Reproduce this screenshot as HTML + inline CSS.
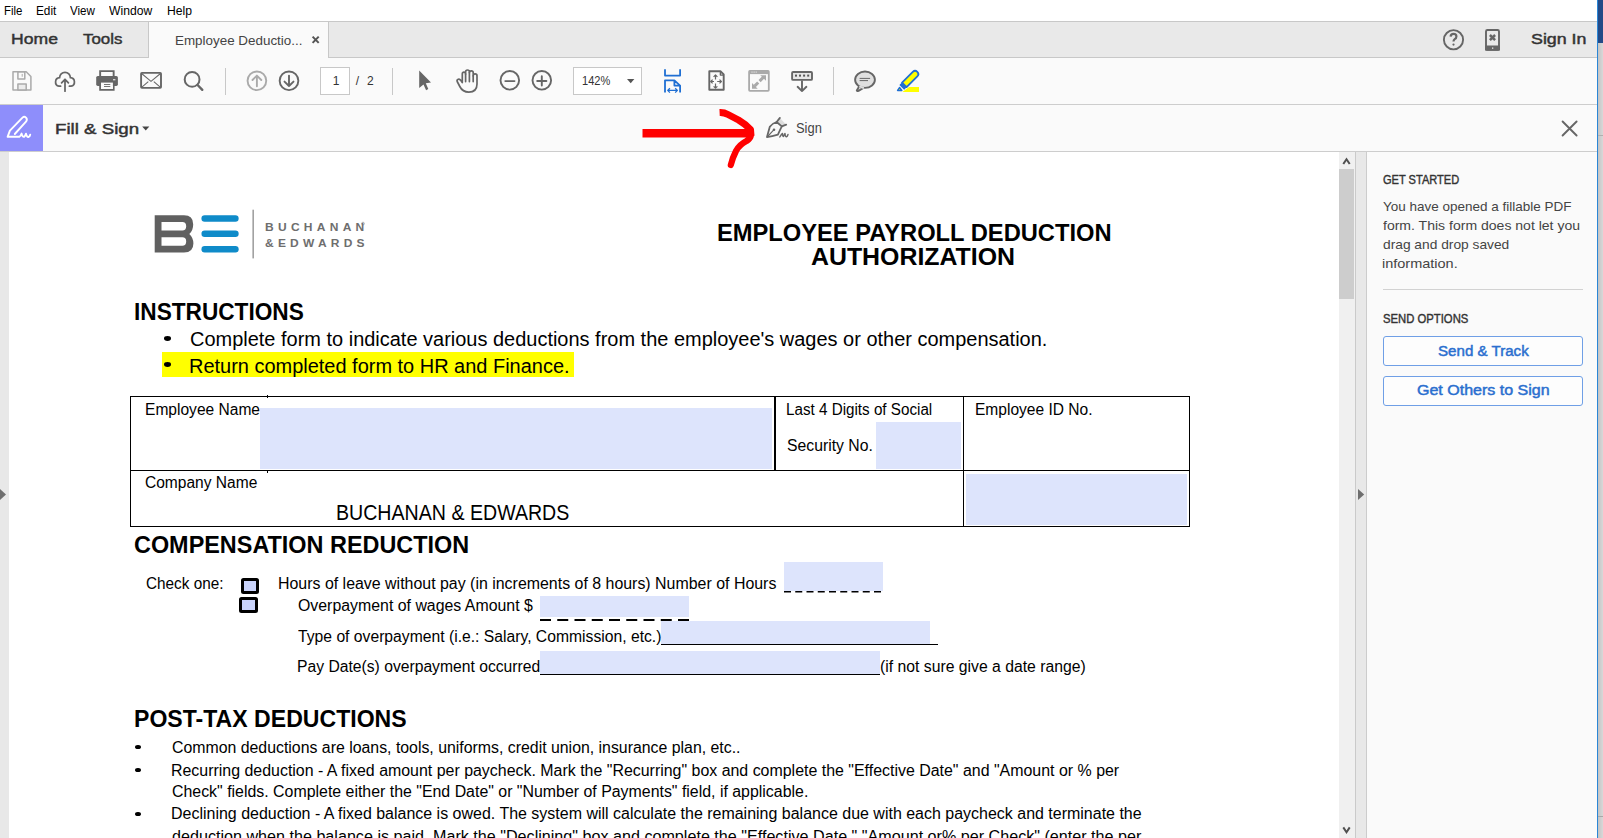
<!DOCTYPE html>
<html><head><meta charset="utf-8">
<style>
*{margin:0;padding:0;box-sizing:border-box}
html,body{width:1603px;height:838px;overflow:hidden;background:#fff;font-family:"Liberation Sans",sans-serif}
.a{position:absolute}
.t{position:absolute;white-space:nowrap;line-height:1;transform-origin:0 0}
svg{position:absolute;overflow:visible}
</style></head><body>
<!-- menu bar -->
<div class="a" style="left:0;top:21px;width:1597px;height:1px;background:#c8c8c8"></div>
<!-- tab bar -->
<div class="a" style="left:0;top:22px;width:1597px;height:35px;background:#e9e9e9"></div>
<div class="a" style="left:0;top:57px;width:1597px;height:1px;background:#c8c8c8"></div>
<div class="a" style="left:148px;top:21px;width:181px;height:37px;background:#fafafa;border:1px solid #c8c8c8;border-bottom:none"></div>
<!-- toolbar -->
<div class="a" style="left:0;top:58px;width:1597px;height:46px;background:#fafafa"></div>
<div class="a" style="left:0;top:104px;width:1597px;height:1px;background:#cdcdcd"></div>
<!-- fill sign bar -->
<div class="a" style="left:0;top:105px;width:1597px;height:46px;background:#fafafa"></div>
<div class="a" style="left:0;top:151px;width:1597px;height:1px;background:#cdcdcd"></div>
<div class="a" style="left:0;top:105px;width:43px;height:46px;background:#8e8efb"></div>
<!-- doc area -->
<div class="a" style="left:0;top:152px;width:9px;height:686px;background:#e8e8e8"></div>
<div class="a" style="left:1339px;top:152px;width:16px;height:686px;background:#f0f0f0"></div>
<div class="a" style="left:1339px;top:169px;width:15px;height:130px;background:#cdcdcd"></div>
<div class="a" style="left:1355px;top:152px;width:1px;height:686px;background:#cacaca"></div>
<div class="a" style="left:1356px;top:152px;width:10px;height:686px;background:#e8e8e8"></div>
<div class="a" style="left:1366px;top:152px;width:1px;height:686px;background:#cccccc"></div>
<div class="a" style="left:1367px;top:152px;width:230px;height:686px;background:#fafafa"></div>
<!-- window border right -->
<div class="a" style="left:1597px;top:0;width:1px;height:838px;background:#2a86d6"></div>
<div class="a" style="left:1598px;top:0;width:5px;height:43px;background:#234a87"></div>
<div class="a" style="left:1598px;top:43px;width:5px;height:795px;background:linear-gradient(90deg,#c4c4c4,#d8d8d8)"></div>
<div class="a" style="left:1598px;top:135px;width:5px;height:1px;background:#b0b0b0"></div>
<div class="a" style="left:1598px;top:816px;width:5px;height:1px;background:#a8a8a8"></div>


<!-- panel extras -->
<div class="a" style="left:1383px;top:289px;width:200px;height:1px;background:#d2d2d2"></div>
<div class="a" style="left:1383px;top:336px;width:200px;height:30px;border:1px solid #6f9fe6;border-radius:3px;background:#fdfdfd"></div>
<div class="a" style="left:1383px;top:376px;width:200px;height:30px;border:1px solid #6f9fe6;border-radius:3px;background:#fdfdfd"></div>
<svg class="a" style="left:0;top:0" width="1603" height="838">
  <path d="M1343.3 164 L1346.5 159.2 L1349.7 164" fill="none" stroke="#505050" stroke-width="2"/>
  <path d="M1343.3 827.4 L1346.5 832.2 L1349.7 827.4" fill="none" stroke="#505050" stroke-width="2"/>
  <path d="M1358 489 L1364.2 494.5 L1358 500 Z" fill="#6e6e6e"/>
  <path d="M0 489 L6 494.5 L0 500 Z" fill="#6e6e6e"/>
</svg>
<!-- ===== document graphics ===== -->
<svg class="a" style="left:0;top:0" width="400" height="300" viewBox="0 0 400 300">
  <path fill="#606060" fill-rule="evenodd" d="M154.7 215.2 H184 Q193.2 215.2 193.2 224.2 Q193.2 230.5 189.3 233.9 Q193.4 237.5 193.4 243.6 Q193.4 252.6 184 252.6 H154.7 Z M161.5 222 H182.3 Q186.2 222 186.2 226.25 Q186.2 230.5 182.3 230.5 H161.5 Z M161.5 237.3 H182.3 Q186.2 237.3 186.2 241.5 Q186.2 245.7 182.3 245.7 H161.5 Z"/>
  <g stroke="#0f8bc9" stroke-width="6.5" stroke-linecap="round">
    <line x1="204.7" y1="218.45" x2="235.4" y2="218.45"/>
    <line x1="204.7" y1="233.75" x2="235.4" y2="233.75"/>
    <line x1="204.7" y1="249.3" x2="235.4" y2="249.3"/>
  </g>
  <rect x="252.5" y="209.7" width="1.3" height="48.7" fill="#8c8c8c"/>
  <circle cx="363" cy="223.6" r="1.4" fill="none" stroke="#888" stroke-width="0.6"/>
</svg>
<div class="a" style="left:162px;top:351.5px;width:412px;height:25.3px;background:#ffff00"></div>
<!-- bullets -->
<div class="a" style="left:163.9px;top:336px;width:7px;height:4.8px;border-radius:50%;background:#000"></div>
<div class="a" style="left:163.9px;top:362.1px;width:7px;height:4.8px;border-radius:50%;background:#000"></div>
<div class="a" style="left:134.9px;top:744.7px;width:6.4px;height:4.6px;border-radius:50%;background:#000"></div>
<div class="a" style="left:134.9px;top:767.5px;width:6.4px;height:4.6px;border-radius:50%;background:#000"></div>
<div class="a" style="left:134.9px;top:811.7px;width:6.4px;height:4.6px;border-radius:50%;background:#000"></div>
<!-- fields -->
<div class="a" style="left:260px;top:408px;width:512px;height:61px;background:#dde4fc"></div>
<div class="a" style="left:876px;top:422px;width:85px;height:47px;background:#dde4fc"></div>
<div class="a" style="left:966px;top:474px;width:221px;height:51px;background:#dde4fc"></div>
<div class="a" style="left:784px;top:562px;width:99px;height:28.5px;background:#dde4fc"></div>
<div class="a" style="left:540px;top:596px;width:149px;height:21px;background:#dde4fc"></div>
<div class="a" style="left:661px;top:621px;width:269px;height:22.8px;background:#dde4fc"></div>
<div class="a" style="left:540px;top:651px;width:340px;height:23px;background:#dde4fc"></div>
<!-- table -->
<div class="a" style="left:130px;top:396px;width:1060px;height:131px;border:1.5px solid #000"></div>
<div class="a" style="left:130px;top:469.5px;width:1060px;height:1.5px;background:#000"></div>
<div class="a" style="left:774px;top:396px;width:1.5px;height:75px;background:#000"></div>
<div class="a" style="left:962.8px;top:396px;width:1.5px;height:131px;background:#000"></div>
<div class="a" style="left:267px;top:395px;width:1.2px;height:3px;background:#000"></div>
<div class="a" style="left:267px;top:469.5px;width:1.2px;height:3px;background:#000"></div>
<!-- underlines -->
<div class="a" style="left:661px;top:643.8px;width:277px;height:1.2px;background:#000"></div>
<div class="a" style="left:540px;top:673.8px;width:340px;height:1.2px;background:#000"></div>
<svg class="a" style="left:0;top:0" width="1000" height="700">
  <line x1="784" y1="591.8" x2="881" y2="591.8" stroke="#000" stroke-width="1.4" stroke-dasharray="7 4.25"/>
  <line x1="540" y1="620" x2="689" y2="620" stroke="#000" stroke-width="2.2" stroke-dasharray="11 6.25"/>
</svg>
<!-- checkboxes -->
<div class="a" style="left:241px;top:578px;width:18px;height:16px;border:3.5px solid #000;border-radius:2.5px;background:#c9d3fb"></div>
<div class="a" style="left:239px;top:597px;width:19px;height:16px;border:3.5px solid #000;border-radius:2.5px;background:#c9d3fb"></div>

<!-- ===== chrome icons ===== -->
<svg class="a" style="left:0;top:0" width="1603" height="160" viewBox="0 0 1603 160">
  <!-- save -->
  <g fill="none" stroke="#aaaaaa" stroke-width="1.5" stroke-linejoin="round">
    <path d="M13 71.8 H26.2 L30.9 76.5 V89.9 H13 Z"/>
    <rect x="17.9" y="71.8" width="6.9" height="7.3"/>
    <rect x="17.9" y="83.9" width="8.3" height="6" fill="#ececec"/>
  </g>
  <rect x="21.7" y="73.9" width="1" height="2.8" fill="#aaa"/>
  <!-- upload cloud -->
  <g fill="none" stroke="#666" stroke-width="1.75" stroke-linecap="round" stroke-linejoin="round">
    <path d="M60.6 86.2 H59 A4.3 4.3 0 0 1 59.6 77.7 A5.4 5.4 0 0 1 70.4 77.7 A4.3 4.3 0 0 1 71 86.2 H69.4"/>
    <path d="M65 91.2 V79.3 M61.6 82.8 L65 79.3 L68.4 82.8"/>
  </g>
  <!-- printer -->
  <g fill="#666">
    <path d="M99.2 70.2 h15.4 v6 h-1.9 v-4.2 h-11.6 v4.2 h-1.9 z"/>
    <rect x="96.2" y="75.9" width="21.7" height="10" rx="1.6"/>
    <path d="M99.2 81.7 h15.4 v9 h-15.4 z M101 82.6 v6.3 h11.9 v-6.3 z" fill-rule="evenodd"/>
    <rect x="104" y="84" width="6.3" height="1" />
    <rect x="104" y="86" width="6.3" height="1" />
  </g>
  <rect x="101" y="82.6" width="11.9" height="6.3" fill="#fafafa"/>
  <rect x="104" y="84.1" width="6.3" height="0.9" fill="#666"/>
  <rect x="104" y="86.1" width="6.3" height="0.9" fill="#666"/>
  <rect x="113" y="79.2" width="2.4" height="1.1" fill="#eee"/>
  <!-- mail -->
  <rect x="141.1" y="72.9" width="19.9" height="15" rx="0.8" fill="none" stroke="#666" stroke-width="1.9"/>
  <path d="M141.6 73.5 L151 81.3 L160.5 73.5 M141.6 87.3 L148.3 81.6 M160.5 87.3 L153.8 81.6" fill="none" stroke="#666" stroke-width="1.05"/>
  <!-- search -->
  <circle cx="192.1" cy="79.4" r="7.4" fill="none" stroke="#666" stroke-width="2"/>
  <path d="M197.6 85 L202.3 89.8" stroke="#666" stroke-width="2.4" stroke-linecap="round"/>
  <!-- separators -->
  <rect x="225" y="68" width="1" height="27" fill="#c8c8c8"/>
  <rect x="392" y="68" width="1" height="27" fill="#c8c8c8"/>
  <rect x="833" y="67" width="1" height="28" fill="#c8c8c8"/>
  <!-- up/down -->
  <g fill="none" stroke-width="1.9" stroke-linecap="round" stroke-linejoin="round">
    <circle cx="256.9" cy="80.8" r="9.35" stroke="#aaaaaa"/>
    <path d="M256.9 86.2 V75.8 M252.5 80 L256.9 75.6 L261.3 80" stroke="#aaaaaa"/>
    <circle cx="289" cy="80.8" r="9.35" stroke="#666"/>
    <path d="M289 75.6 V86 M284.5 81.6 L289 86 L293.5 81.6" stroke="#666"/>
  </g>
  <!-- page box -->
  <rect x="320.5" y="67.5" width="29" height="27" fill="#fff" stroke="#c8c8c8" stroke-width="1"/>
  <!-- arrow cursor -->
  <path d="M419.2 70.6 L431 82.6 L425.8 83.3 L428.3 89 L426.1 90.2 L423.5 84.4 L419.2 88 Z" fill="#666"/>
  <!-- hand -->
  <g fill="none" stroke="#666" stroke-width="1.7" stroke-linejoin="round" stroke-linecap="round">
    <path d="M462.3 82.5 V74 Q462.3 72.1 463.95 72.1 Q465.6 72.1 465.6 74 V71.9 Q465.6 70 467.5 70 Q469.4 70 469.4 71.9 V72.6 Q469.4 70.8 471.3 70.8 Q473.2 70.8 473.2 72.6 V75.8 Q473.2 73.9 475.1 73.9 Q477 73.9 477 75.8 V84 Q477 92.1 468.8 92.1 Q462.6 92.1 459.8 86.5 L457.2 81.5 Q456.6 79.8 458.3 79.2 Q460.2 78.7 462.3 82.5"/>
    <path d="M465.6 74 V81.6 M469.4 72.6 V81.6 M473.2 75.8 V81.6"/>
  </g>
  <!-- zoom -->
  <g fill="none" stroke="#666" stroke-width="1.9" stroke-linecap="round">
    <circle cx="509.8" cy="80.35" r="9.3"/>
    <path d="M505.3 81.1 H514.5"/>
    <circle cx="541.8" cy="80.35" r="9.3"/>
    <path d="M537.2 81 H546.4 M541.8 76.3 V85.6"/>
  </g>
  <rect x="573.5" y="67.5" width="68" height="27" fill="#fff" stroke="#c8c8c8" stroke-width="1"/>
  <path d="M627 79 H634.4 L630.7 83.2 Z" fill="#555"/>
  <!-- fit width (blue) -->
  <g fill="none" stroke="#1f6fd3" stroke-width="1.8" stroke-linejoin="round">
    <path d="M665 69.2 V75.6 H680.1 V69.2"/>
    <path d="M665 92.6 V80.3 H674.4 L680.1 85.6 V92.6 M674.4 80.3 V85.6 H680.1"/>
    <path d="M667.8 90.4 H677.3 M669.9 88.2 L667.7 90.4 L669.9 92.6 M675.2 88.2 L677.4 90.4 L675.2 92.6" stroke-width="1.3"/>
  </g>
  <!-- page icon -->
  <g fill="none" stroke="#666" stroke-width="1.9" stroke-linejoin="round">
    <path d="M709.3 71.2 H720.4 L723.7 74.5 V89.7 H709.3 Z"/>
    <path d="M720.4 71.2 V75.1 H723.7" stroke-width="1.4"/>
    <path d="M715.5 75 V79.6 M715.5 83.4 V88.3 M710.8 81.5 H714 M717.2 81.5 H721.3 M713.6 76.8 L715.5 74.9 L717.4 76.8 M713.6 86.3 L715.5 88.2 L717.4 86.3 M712.6 79.6 L710.7 81.5 L712.6 83.4 M719.5 79.6 L721.4 81.5 L719.5 83.4" stroke-width="1.2"/>
  </g>
  <!-- fullscreen -->
  <rect x="749.1" y="70.9" width="19.7" height="19.9" rx="0.8" fill="none" stroke="#aaa" stroke-width="1.8"/>
  <rect x="749.1" y="70.9" width="19.7" height="3.2" fill="#aaa"/>
  <path d="M760.2 75.2 H766 V80.8 Z M752 83 V88.7 H757.7 Z" fill="#aaa"/>
  <path d="M754.6 86.1 L758.2 82.5 M759.6 81.1 L763.3 77.4" stroke="#aaa" stroke-width="3"/>
  <g fill="#f4f4f4"><rect x="751.5" y="71.6" width="1" height="1"/><rect x="753.6" y="71.6" width="1" height="1"/><rect x="755.7" y="71.6" width="1" height="1"/></g>
  <!-- scroll icon -->
  <rect x="792.1" y="72" width="19.9" height="7.9" rx="1" fill="#e6e6e6" stroke="#666" stroke-width="1.9"/>
  <g fill="#555"><rect x="795" y="74.6" width="2" height="2"/><rect x="799" y="74.6" width="2" height="2"/><rect x="803.1" y="74.6" width="2" height="2"/><rect x="807.2" y="74.6" width="2" height="2"/></g>
  <path d="M802 81.3 V91 M797.6 86.8 L802 91.1 L806.4 86.8" fill="none" stroke="#666" stroke-width="1.9" stroke-linecap="round" stroke-linejoin="round"/>
  <!-- comment -->
  <path d="M859.3 86.1 L856.8 90.5 Q857 91.4 858.5 90.9 L863 88.3" fill="#e0e0e0" stroke="#666" stroke-width="1.9" stroke-linejoin="round"/>
  <ellipse cx="865" cy="79.7" rx="9.9" ry="8.2" fill="#e0e0e0" stroke="#666" stroke-width="1.9"/>
  <path d="M859.3 86.4 L863.8 88" stroke="#e0e0e0" stroke-width="2"/>
  <path d="M859.6 78.4 H870.1 M859.6 80.6 H868" stroke="#666" stroke-width="1"/>
  <!-- highlighter -->
  <path d="M902.3 91.9 H919 V86.9 H909.2 Z" fill="#ffff00"/>
  <g transform="translate(909.4 79.8) rotate(-45)">
    <path d="M-7.2 -3.2 H8 A3.2 3.2 0 0 1 8 3.2 H-7.2 Z" fill="#ffff00" stroke="#1f6fd3" stroke-width="1.8" stroke-linejoin="round"/>
    <rect x="-10.8" y="-3.4" width="4" height="6.8" fill="#1f6fd3"/>
  </g>
  <path d="M897.6 90.4 H901.8 L899.5 87.6 Z" fill="#ffff00" stroke="#1f6fd3" stroke-width="1.5" stroke-linejoin="round"/>
  <!-- tab close x -->
  <path d="M312.6 36.6 L318.7 42.9 M318.7 36.6 L312.6 42.9" stroke="#555" stroke-width="2"/>
  <!-- help circle -->
  <circle cx="1453.5" cy="39.75" r="9.6" fill="none" stroke="#666" stroke-width="1.9"/>
  <path d="M1450.6 36.6 Q1450.8 33.9 1453.5 33.9 Q1456.4 33.9 1456.4 36.4 Q1456.4 38.1 1454.7 39.1 Q1453.5 39.9 1453.5 41.6" fill="none" stroke="#666" stroke-width="2.2"/>
  <circle cx="1453.5" cy="44.6" r="1.1" fill="#666"/>
  <!-- phone -->
  <rect x="1486" y="30" width="13" height="19.8" rx="1.4" fill="none" stroke="#666" stroke-width="1.9"/>
  <rect x="1485" y="45.5" width="15" height="5.3" rx="1" fill="#666"/>
  <rect x="1492" y="47.5" width="1.3" height="1.3" fill="#e9e9e9"/>
  <path d="M1489.9 35 L1495.1 40.2 M1495.1 35 L1489.9 40.2" stroke="#666" stroke-width="2.5"/>
  <!-- fill & sign pen (white) -->
  <g fill="none" stroke="#fff" stroke-width="1.9" stroke-linejoin="round" stroke-linecap="round">
    <path d="M14.8 134 L26.2 121.4 Q27.6 119.3 26 117.7 Q24.3 116 22.5 117.6 L9.9 130.6 L7.6 136.8 H19.3 Q20.6 136.3 21.6 133.6 Q22.6 137.8 24.4 136.6 Q25.4 135.7 26 133.6 Q26.9 137.6 28.7 136.9 Q29.9 136.4 30.2 134.6"/>
  </g>
  <!-- fill & sign triangle -->
  <path d="M142.2 126.5 H149.3 L145.75 130.6 Z" fill="#444"/>
  <!-- sign pen icon -->
  <path d="M779.9 117.9 L786.2 124.7 L781.8 126.4 L776.6 122 Z" fill="#dcdcdc"/>
  <g fill="none" stroke="#666" stroke-width="1.8" stroke-linejoin="round" stroke-linecap="round">
    <path d="M767 137.1 L769.8 126.8 Q772 123.5 776.6 122 L781.8 126.4 Q779.5 131 777.9 134.7 Q772 136.4 767 137.1 Z"/>
    <path d="M776.6 122 L779.9 117.9 M781.8 126.4 L786.2 124.7"/>
    <path d="M767.6 136.5 L773.8 129.9" stroke-width="1.1"/>
    <path d="M779.8 137 Q781.5 134 782.5 133.5 Q782.5 136.5 783.5 136.5 Q784.5 134 785 133.5 Q785.2 136.8 786.5 136.8 Q787.6 136.4 788 134.5" stroke-width="1.4"/>
  </g>
  <circle cx="774" cy="129.7" r="1.3" fill="#666"/>
  <!-- close X -->
  <path d="M1562.6 121.5 L1576.6 135.5 M1576.6 121.5 L1562.6 135.5" stroke="#666" stroke-width="1.9" stroke-linecap="round"/>
</svg>
<!-- red arrow -->
<svg class="a" style="left:0;top:0" width="1000" height="200" viewBox="0 0 1000 200">
  <path d="M642.5 133.2 H749" stroke="#ff0000" stroke-width="8.5" fill="none"/>
  <path d="M719.6 112.6 Q724 112.4 728 114.5 L738.5 120 Q746 124.5 750.5 129.5 L751 136" stroke="#ff0000" stroke-width="7" fill="none" stroke-linejoin="round"/>
  <path d="M751 135 Q750.5 138.5 746.5 141 Q739.5 144.5 736 151 Q732.5 158 730.8 165" stroke="#ff0000" stroke-width="6.2" fill="none" stroke-linecap="round"/>
</svg>
<div class="t" id="t0" style="left:4.1px;top:5.38px;font-size:12.5px;font-weight:400;color:#000;transform:scaleX(0.9137);">File</div>
<div class="t" id="t1" style="left:35.5px;top:5.38px;font-size:12.5px;font-weight:400;color:#000;transform:scaleX(0.9442);">Edit</div>
<div class="t" id="t2" style="left:70.0px;top:5.38px;font-size:12.5px;font-weight:400;color:#000;transform:scaleX(0.9275);">View</div>
<div class="t" id="t3" style="left:109.0px;top:5.38px;font-size:12.5px;font-weight:400;color:#000;transform:scaleX(0.9703);">Window</div>
<div class="t" id="t4" style="left:166.5px;top:5.38px;font-size:12.5px;font-weight:400;color:#000;transform:scaleX(0.9740);">Help</div>
<div class="t" id="t5" style="left:10.5px;top:31.40px;font-size:15.3px;font-weight:400;color:#333;transform:scaleX(1.1495);-webkit-text-stroke-width:0.45px;">Home</div>
<div class="t" id="t6" style="left:82.8px;top:31.40px;font-size:15.3px;font-weight:400;color:#333;transform:scaleX(1.1045);-webkit-text-stroke-width:0.45px;">Tools</div>
<div class="t" id="t7" style="left:175.2px;top:33.55px;font-size:13px;font-weight:400;color:#444;transform:scaleX(1.0313);">Employee Deductio...</div>
<div class="t" id="t8" style="left:1531.2px;top:31.20px;font-size:15.3px;font-weight:400;color:#333;transform:scaleX(1.1646);-webkit-text-stroke-width:0.45px;">Sign In</div>
<div class="t" id="t9" style="left:332.7px;top:75.00px;font-size:12px;font-weight:400;color:#333;">1</div>
<div class="t" id="t10" style="left:355.8px;top:75.00px;font-size:12px;font-weight:400;color:#333;">/</div>
<div class="t" id="t11" style="left:367.0px;top:75.00px;font-size:12px;font-weight:400;color:#333;">2</div>
<div class="t" id="t12" style="left:582.1px;top:74.97px;font-size:12.5px;font-weight:400;color:#333;transform:scaleX(0.8839);">142%</div>
<div class="t" id="t13" style="left:54.7px;top:121.00px;font-size:15.3px;font-weight:400;color:#333;transform:scaleX(1.2224);-webkit-text-stroke-width:0.45px;">Fill &amp; Sign</div>
<div class="t" id="t14" style="left:795.9px;top:120.50px;font-size:14px;font-weight:400;color:#444;transform:scaleX(0.9205);">Sign</div>
<div class="t" id="t15" style="left:1382.7px;top:173.77px;font-size:12.5px;font-weight:400;color:#333;transform:scaleX(0.8852);-webkit-text-stroke-width:0.4px;">GET STARTED</div>
<div class="t" id="t16" style="left:1383.0px;top:200.15px;font-size:13px;font-weight:400;color:#444;transform:scaleX(1.0372);">You have opened a fillable PDF</div>
<div class="t" id="t17" style="left:1383.0px;top:219.15px;font-size:13px;font-weight:400;color:#444;transform:scaleX(1.0793);">form. This form does not let you</div>
<div class="t" id="t18" style="left:1383.0px;top:238.15px;font-size:13px;font-weight:400;color:#444;transform:scaleX(1.0588);">drag and drop saved</div>
<div class="t" id="t19" style="left:1382.1px;top:257.15px;font-size:13px;font-weight:400;color:#444;transform:scaleX(1.1138);">information.</div>
<div class="t" id="t20" style="left:1383.0px;top:312.77px;font-size:12.5px;font-weight:400;color:#333;transform:scaleX(0.9034);-webkit-text-stroke-width:0.4px;">SEND OPTIONS</div>
<div class="t" id="t21" style="left:1437.6px;top:343.50px;font-size:14px;font-weight:400;color:#2a6fcf;transform:scaleX(1.0796);-webkit-text-stroke-width:0.45px;">Send &amp; Track</div>
<div class="t" id="t22" style="left:1416.8px;top:383.30px;font-size:14px;font-weight:400;color:#2a6fcf;transform:scaleX(1.1443);-webkit-text-stroke-width:0.45px;">Get Others to Sign</div>
<div class="t" id="t23" style="left:265.2px;top:221.57px;font-size:11.8px;font-weight:700;color:#6e6e6e;transform:scaleX(1.0175);letter-spacing:4.2px;">BUCHANAN</div>
<div class="t" id="t24" style="left:265.1px;top:237.77px;font-size:11.8px;font-weight:700;color:#6e6e6e;transform:scaleX(1.0132);letter-spacing:4.2px;">&amp;EDWARDS</div>
<div class="t" id="t25" style="left:716.8px;top:222.03px;font-size:23.5px;font-weight:700;color:#000;transform:scaleX(1.0084);">EMPLOYEE PAYROLL DEDUCTION</div>
<div class="t" id="t26" style="left:811.3px;top:246.03px;font-size:23.5px;font-weight:700;color:#000;transform:scaleX(1.0583);">AUTHORIZATION</div>
<div class="t" id="t27" style="left:134.0px;top:301.02px;font-size:23.5px;font-weight:700;color:#000;transform:scaleX(0.9634);">INSTRUCTIONS</div>
<div class="t" id="t28" style="left:190.1px;top:329.00px;font-size:20px;font-weight:400;color:#000;transform:scaleX(0.9984);">Complete form to indicate various deductions from the employee's wages or other compensation.</div>
<div class="t" id="t29" style="left:189.1px;top:355.80px;font-size:20px;font-weight:400;color:#000;transform:scaleX(0.9980);">Return completed form to HR and Finance.</div>
<div class="t" id="t30" style="left:145.4px;top:401.57px;font-size:15.8px;font-weight:400;color:#000;transform:scaleX(0.9849);">Employee Name</div>
<div class="t" id="t31" style="left:786.1px;top:402.37px;font-size:15.8px;font-weight:400;color:#000;transform:scaleX(0.9626);">Last 4 Digits of Social</div>
<div class="t" id="t32" style="left:787.2px;top:437.77px;font-size:15.8px;font-weight:400;color:#000;transform:scaleX(0.9972);">Security No.</div>
<div class="t" id="t33" style="left:975.1px;top:401.57px;font-size:15.8px;font-weight:400;color:#000;transform:scaleX(0.9845);">Employee ID No.</div>
<div class="t" id="t34" style="left:145.4px;top:474.57px;font-size:15.8px;font-weight:400;color:#000;transform:scaleX(0.9838);">Company Name</div>
<div class="t" id="t35" style="left:336.4px;top:502.30px;font-size:22px;font-weight:400;color:#000;transform:scaleX(0.8906);">BUCHANAN &amp; EDWARDS</div>
<div class="t" id="t36" style="left:134.1px;top:534.02px;font-size:23.5px;font-weight:700;color:#000;transform:scaleX(0.9964);">COMPENSATION REDUCTION</div>
<div class="t" id="t37" style="left:146.0px;top:575.57px;font-size:15.8px;font-weight:400;color:#000;transform:scaleX(0.9696);">Check one:</div>
<div class="t" id="t38" style="left:277.8px;top:575.97px;font-size:15.8px;font-weight:400;color:#000;transform:scaleX(1.0082);">Hours of leave without pay (in increments of 8 hours) Number of Hours</div>
<div class="t" id="t39" style="left:297.5px;top:598.17px;font-size:15.8px;font-weight:400;color:#000;transform:scaleX(1.0053);">Overpayment of wages Amount $</div>
<div class="t" id="t40" style="left:298.4px;top:628.77px;font-size:15.8px;font-weight:400;color:#000;transform:scaleX(0.9936);">Type of overpayment (i.e.: Salary, Commission, etc.)</div>
<div class="t" id="t41" style="left:297.3px;top:658.57px;font-size:15.8px;font-weight:400;color:#000;transform:scaleX(0.9928);">Pay Date(s) overpayment occurred</div>
<div class="t" id="t42" style="left:880.0px;top:659.17px;font-size:15.8px;font-weight:400;color:#000;transform:scaleX(0.9973);">(if not sure give a date range)</div>
<div class="t" id="t43" style="left:133.9px;top:708.02px;font-size:23.5px;font-weight:700;color:#000;transform:scaleX(0.9819);">POST-TAX DEDUCTIONS</div>
<div class="t" id="t44" style="left:171.6px;top:740.17px;font-size:15.8px;font-weight:400;color:#000;transform:scaleX(1.0038);">Common deductions are loans, tools, uniforms, credit union, insurance plan, etc..</div>
<div class="t" id="t45" style="left:170.7px;top:763.17px;font-size:15.8px;font-weight:400;color:#000;transform:scaleX(1.0086);">Recurring deduction - A fixed amount per paycheck. Mark the "Recurring" box and complete the "Effective Date" and "Amount or % per</div>
<div class="t" id="t46" style="left:171.6px;top:783.57px;font-size:15.8px;font-weight:400;color:#000;transform:scaleX(1.0066);">Check" fields. Complete either the "End Date" or "Number of Payments" field, if applicable.</div>
<div class="t" id="t47" style="left:170.7px;top:806.37px;font-size:15.8px;font-weight:400;color:#000;transform:scaleX(1.0116);">Declining deduction - A fixed balance is owed. The system will calculate the remaining balance due with each paycheck and terminate the</div>
<div class="t" id="t48" style="left:171.6px;top:828.77px;font-size:15.8px;font-weight:400;color:#000;transform:scaleX(1.0212);">deduction when the balance is paid. Mark the "Declining" box and complete the "Effective Date," "Amount or% per Check" (enter the per</div>
</body></html>
